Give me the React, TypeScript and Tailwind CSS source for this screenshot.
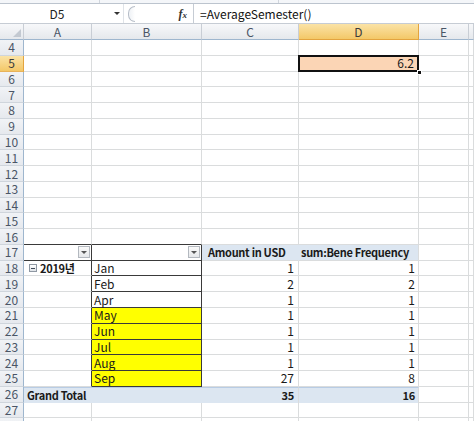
import React from "react";

const GRID = "border-r border-b border-[#dadcdd]";

function RowHead({ n, sel }: { n?: number; sel?: boolean }) {
  return (
    <div
      className={
        "flex items-center justify-center border-r border-b text-[12px] " +
        (sel
          ? "bg-gradient-to-b from-[#fbe3a6] to-[#f3c867] border-r-[#e3a43f] border-b-[#e8b35a] text-[#3b3b3b]"
          : "bg-gradient-to-b from-[#f1f3f6] to-[#e6e9ee] border-r-[#9eb6ce] border-b-[#cfd5dc] text-[#4a5566]")
      }
    >
      {n}
    </div>
  );
}

function FilterBtn() {
  return (
    <div className="w-[12px] h-[12px] border border-[#b3b8bf] bg-gradient-to-b from-[#fafafa] to-[#e6e8eb] flex items-center justify-center">
      <div className="w-0 h-0 border-l-[3px] border-r-[3px] border-t-[3px] border-l-transparent border-r-transparent border-t-[#555]" />
    </div>
  );
}

function CollapseIcon() {
  return (
    <div className="w-[8px] h-[8px] border border-[#8f98a3] bg-gradient-to-b from-white to-[#dfe3e8] flex items-center justify-center mr-[3px] shrink-0">
      <div className="w-[4px] h-[1px] bg-[#3f4a57]" />
    </div>
  );
}

function Empty({ cls = "" }: { cls?: string }) {
  return <div className={GRID + " " + cls} />;
}

function EmptyRow({ n }: { n?: number }) {
  return (
    <>
      <RowHead n={n} />
      <Empty />
      <Empty />
      <Empty />
      <Empty />
      <Empty />
      <Empty />
    </>
  );
}

const months: { m: string; c: string; d: string; y?: boolean }[] = [
  { m: "Jan", c: "1", d: "1" },
  { m: "Feb", c: "2", d: "2" },
  { m: "Apr", c: "1", d: "1" },
  { m: "May", c: "1", d: "1", y: true },
  { m: "Jun", c: "1", d: "1", y: true },
  { m: "Jul", c: "1", d: "1", y: true },
  { m: "Aug", c: "1", d: "1", y: true },
  { m: "Sep", c: "27", d: "8", y: true },
];

const BOLD = "font-bold text-[11px] tracking-[-0.3px]";

export default function App() {
  const colHead =
    "flex items-center justify-center border-r border-b border-r-[#c9ced5] border-b-[#9eb6ce] bg-gradient-to-b from-[#f7f8fa] to-[#e5e8ec] text-[12px] text-[#4a5566]";
  const colHeadSel =
    "flex items-center justify-center border-r border-b border-r-[#e3a43f] border-b-[#e3a43f] bg-gradient-to-b from-[#fbe3a6] to-[#f3c867] text-[12px] text-[#3b3b3b]";

  return (
    <div className="w-[474px] h-[421px] overflow-hidden bg-white font-['Noto_Sans_CJK_KR','Noto_Sans',sans-serif] text-[12px] text-[#1a1a1a] leading-none">
      {/* top strip */}
      <div className="h-[4px] bg-[#f4f6f9] border-b border-[#bcc4ce] flex">
        <div className="w-[100px] border-r border-[#d0d5dc]" />
        <div className="w-[179px] border-r border-[#d0d5dc]" />
      </div>
      {/* formula bar */}
      <div className="h-[20px] flex border-b border-[#c6ccd4] bg-white">
        <div className="w-[124px] flex items-center border-r border-[#dfe3e8]">
          <div className="w-[114px] text-center text-[12px] text-[#222]">D5</div>
          <div className="w-0 h-0 border-l-[3px] border-r-[3px] border-t-[3px] border-l-transparent border-r-transparent border-t-[#333]" />
        </div>
        <div className="w-[70px] flex items-center bg-white border-r border-[#c6ccd4]">
          <div className="ml-[4px] w-[7px] h-[16px] rounded-l-full border-l border-t border-b border-[#b7bec8] bg-gradient-to-r from-[#eef1f5] to-white" />
          <div className="ml-auto mr-[6px] font-['Liberation_Serif',serif] italic font-bold text-[12px] text-[#333]">
            f<span className="text-[9px]">x</span>
          </div>
        </div>
        <div className="flex-1 flex items-center pl-[6px] text-[12px] text-[#111]">
          =AverageSemester()
        </div>
      </div>
      {/* column header */}
      <div className="grid grid-cols-[24px_68px_110px_97px_120px_50px_5px] h-[16px]">
        <div className="relative border-r border-b border-r-[#c9ced5] border-b-[#9eb6ce] bg-gradient-to-b from-[#f7f8fa] to-[#e5e8ec]">
          <div className="absolute right-[2px] bottom-[2px] w-0 h-0 border-b-[8px] border-l-[8px] border-b-[#c3c9d1] border-l-transparent" />
        </div>
        <div className={colHead}>A</div>
        <div className={colHead}>B</div>
        <div className={colHead}>C</div>
        <div className={colHeadSel}>D</div>
        <div className={colHead}>E</div>
        <div className={colHead} />
      </div>
      {/* body */}
      <div className="grid grid-cols-[24px_68px_110px_97px_120px_50px_5px] auto-rows-[15.77px]">
        <EmptyRow n={4} />
        {/* row 5 */}
        <RowHead n={5} sel />
        <Empty />
        <Empty />
        <Empty />
        <div className="relative">
          <div className="absolute inset-[-1px_0_0_-1px] border-2 border-[#111] bg-[#fbd5b5] flex items-center justify-end pr-[3px] text-[12px]">
            6.2
          </div>
          <div className="absolute right-[-3px] bottom-[-3px] w-[5px] h-[5px] bg-[#111] border border-white" />
        </div>
        <Empty />
        <Empty />
        {[6, 7, 8, 9, 10, 11, 12, 13, 14, 15].map((n) => (
          <EmptyRow key={n} n={n} />
        ))}
        {/* row 16 */}
        <RowHead n={16} />
        <div className="border-r border-b border-r-[#dadcdd] border-b-[#3a3a3a]" />
        <div className="border-r border-b border-r-[#dadcdd] border-b-[#3a3a3a]" />
        <Empty />
        <Empty />
        <Empty />
        <Empty />
        {/* row 17 */}
        <RowHead n={17} />
        <div className="border-r border-b border-[#3a3a3a] flex items-center justify-end pr-[1px]">
          <FilterBtn />
        </div>
        <div className="border-r border-b border-[#3a3a3a] flex items-center justify-end pr-[1px]">
          <FilterBtn />
        </div>
        <div className={"border-r border-b border-r-[#dce6f1] border-b-[#dadcdd] bg-[#dce6f1] flex items-center pl-[6px] whitespace-nowrap " + BOLD}>
          Amount in USD
        </div>
        <div className={"border-r border-b border-r-[#dadcdd] border-b-[#dadcdd] bg-[#dce6f1] flex items-center pl-[2px] whitespace-nowrap " + BOLD}>
          sum:Bene Frequency
        </div>
        <Empty />
        <Empty />
        {months.map((r, i) => (
          <React.Fragment key={r.m}>
            <RowHead n={18 + i} />
            <div className={"border-r border-b border-r-[#3a3a3a] border-b-[#dadcdd] flex items-center pl-[5px] whitespace-nowrap " + BOLD}>
              {i === 0 && (
                <>
                  <CollapseIcon />
                  <span>2019년</span>
                </>
              )}
            </div>
            <div
              className={
                "border-r border-b border-[#3a3a3a] flex items-center pl-[2px] " +
                (r.y ? "bg-[#ffff00]" : "")
              }
            >
              {r.m}
            </div>
            <div className={GRID + " flex items-center justify-end pr-[4px]"}>{r.c}</div>
            <div className={GRID + " flex items-center justify-end pr-[3px]"}>{r.d}</div>
            <Empty />
            <Empty />
          </React.Fragment>
        ))}
        {/* row 26 */}
        <RowHead n={26} />
        <div className={"relative z-10 border-t border-[#b8cce4] bg-[#dce6f1] flex items-center pl-[3px] whitespace-nowrap overflow-visible " + BOLD}>
          Grand Total
        </div>
        <div className="border-t border-[#b8cce4] bg-[#dce6f1]" />
        <div className={"border-t border-r border-[#b8cce4] border-r-[#dadcdd] bg-[#dce6f1] flex items-center justify-end pr-[4px] " + BOLD}>
          35
        </div>
        <div className={"border-t border-[#b8cce4] bg-[#dce6f1] border-r border-r-[#dadcdd] flex items-center justify-end pr-[3px] " + BOLD}>
          16
        </div>
        <div className="border-r border-b border-[#dadcdd]" />
        <Empty />
        <EmptyRow n={27} />
        <EmptyRow />
      </div>
    </div>
  );
}
